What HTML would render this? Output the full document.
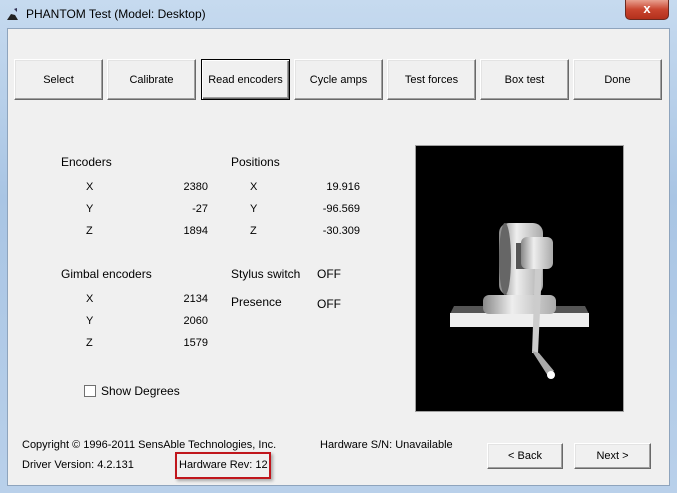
<!DOCTYPE html>
<html><head><style>
*{margin:0;padding:0;box-sizing:border-box}
body{width:677px;height:493px;overflow:hidden;font-family:"Liberation Sans",sans-serif;font-size:11px;color:#000;background:#bcd3ea;position:relative}
.frame{position:absolute;left:0;top:0;width:677px;height:493px;background:linear-gradient(#c6daef,#a9c5e4 40%,#b9d0ea)}
.title{position:absolute;left:26px;top:7px;font-size:12px;color:#000}
.close{position:absolute;left:625px;top:0;width:44px;height:20px;background:linear-gradient(#e8a08f,#c9452f 50%,#b3301c);border:1px solid #6b2a20;border-top:none;border-radius:0 0 5px 5px;color:#fff;font-weight:bold;text-align:center;line-height:18px;font-size:13px}
.client{position:absolute;left:7px;top:28px;width:663px;height:458px;background:#f0f0f0;border:1px solid #8ea4bd}
.t{position:absolute;white-space:nowrap}
.btn{position:absolute;top:59px;width:89px;height:41px;background:#f0f0f0;border:1px solid;border-color:#fff #696969 #696969 #fff;box-shadow:inset -1px -1px 0 #a0a0a0,inset 1px 1px 0 #e3e3e3;text-align:center;line-height:41px}
.btn.sel{border:1px solid #000;box-shadow:inset 1px 1px 0 #fff,inset -1px -1px 0 #696969,inset -2px -2px 0 #a0a0a0}
.r{text-align:right;width:60px}
.h{font-size:12px}
</style></head><body>
<div class="frame"></div>
<svg style="position:absolute;left:5px;top:6px" width="16" height="16"><path d="M2 14 L6 8 L10 9 L13 14 Z" fill="#222"/><path d="M9 3 L12 2 L12 6 Z" fill="#335"/></svg>
<div class="title">PHANTOM Test (Model: Desktop)</div>
<div class="close">x</div>
<div class="client"></div>
<div class="btn" style="left:14px">Select</div>
<div class="btn" style="left:107px">Calibrate</div>
<div class="btn sel" style="left:201px">Read encoders</div>
<div class="btn" style="left:294px">Cycle amps</div>
<div class="btn" style="left:387px">Test forces</div>
<div class="btn" style="left:480px">Box test</div>
<div class="btn" style="left:573px">Done</div>

<div class="t h" style="left:61px;top:155px">Encoders</div>
<div class="t" style="left:86px;top:181px">X</div><div class="t r" style="left:148px;top:181px">2380</div>
<div class="t" style="left:86px;top:203px">Y</div><div class="t r" style="left:148px;top:203px">-27</div>
<div class="t" style="left:86px;top:225px">Z</div><div class="t r" style="left:148px;top:225px">1894</div>

<div class="t h" style="left:231px;top:155px">Positions</div>
<div class="t" style="left:250px;top:181px">X</div><div class="t r" style="left:300px;top:181px">19.916</div>
<div class="t" style="left:250px;top:203px">Y</div><div class="t r" style="left:300px;top:203px">-96.569</div>
<div class="t" style="left:250px;top:225px">Z</div><div class="t r" style="left:300px;top:225px">-30.309</div>

<div class="t h" style="left:61px;top:267px">Gimbal encoders</div>
<div class="t" style="left:86px;top:293px">X</div><div class="t r" style="left:148px;top:293px">2134</div>
<div class="t" style="left:86px;top:315px">Y</div><div class="t r" style="left:148px;top:315px">2060</div>
<div class="t" style="left:86px;top:337px">Z</div><div class="t r" style="left:148px;top:337px">1579</div>

<div class="t h" style="left:231px;top:267px">Stylus switch</div><div class="t h" style="left:317px;top:267px">OFF</div>
<div class="t h" style="left:231px;top:295px">Presence</div><div class="t h" style="left:317px;top:297px">OFF</div>

<div style="position:absolute;left:84px;top:385px;width:12px;height:12px;border:1px solid #707070;background:#fff"></div>
<div class="t h" style="left:101px;top:384px">Show Degrees</div>

<svg style="position:absolute;left:415px;top:145px" width="209" height="267">
<rect x="0" y="0" width="209" height="267" fill="#a0a0a0"/>
<rect x="1" y="1" width="207" height="265" fill="#000"/>
<defs><linearGradient id="g" x1="0" x2="1"><stop offset="0" stop-color="#888"/><stop offset="0.4" stop-color="#eee"/><stop offset="1" stop-color="#aaa"/></linearGradient></defs>
<polygon points="35,169 174,169 170,161 39,161" fill="#555"/>
<rect x="35" y="168" width="139" height="14" fill="#eee"/>
<rect x="68" y="150" width="73" height="19" rx="6" fill="url(#g)"/>
<rect x="84" y="78" width="44" height="72" rx="10" fill="url(#g)"/>
<ellipse cx="90" cy="114" rx="6" ry="36" fill="#666"/>
<rect x="101" y="98" width="20" height="26" fill="#555"/>
<rect x="106" y="92" width="32" height="32" rx="6" fill="url(#g)"/>
<polygon points="120,124 127,124 123,208 117,208" fill="#ccc"/>
<polygon points="117,206 124,208 139,226 133,231" fill="#aaa"/>
<circle cx="136" cy="230" r="4" fill="#fff"/>
</svg>

<div class="t" style="left:22px;top:439px">Copyright © 1996-2011 SensAble Technologies, Inc.</div>
<div class="t" style="left:320px;top:439px">Hardware S/N: Unavailable</div>
<div class="t" style="left:22px;top:459px">Driver Version: 4.2.131</div>
<div style="position:absolute;left:175px;top:452px;width:96px;height:27px;border:2px solid #c0161c;box-shadow:2px 2px 3px rgba(0,0,0,.3)"></div>
<div class="t" style="left:179px;top:459px">Hardware Rev: 12</div>
<div class="btn" style="left:487px;top:443px;width:76px;height:26px;line-height:24px">&lt; Back</div>
<div class="btn" style="left:574px;top:443px;width:77px;height:26px;line-height:24px">Next &gt;</div>
</body></html>
